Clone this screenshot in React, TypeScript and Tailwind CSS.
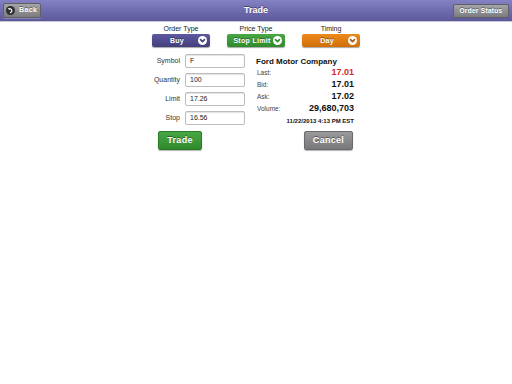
import React from 'react';

const font = { fontFamily: '"Liberation Sans", Arial, Helvetica, sans-serif' };

function Chevron({ color }: { color: string }) {
  return (
    <svg width="9" height="9" viewBox="0 0 10 10" className="shrink-0">
      <circle cx="5" cy="5" r="5" fill="#ffffff" />
      <path d="M2.8 4 L5 6.2 L7.2 4" fill="none" stroke={color} strokeWidth="1.8" strokeLinecap="round" strokeLinejoin="round" />
    </svg>
  );
}

function Picker({ label, value, bg, chev }: { label: string; value: string; bg: string; chev: string }) {
  return (
    <div className="flex flex-col items-center">
      <div className="text-[7px] leading-[8px] text-[#222] mb-[1px]">{label}</div>
      <div className={`w-[58px] h-[13px] rounded-[2px] flex items-center pl-[4px] pr-[3px] shadow-[0_1px_1px_rgba(0,0,0,0.35)] ${bg}`}>
        <span className="flex-1 text-center text-white font-bold text-[7px] leading-[8px] tracking-[0.3px] [text-shadow:0_-1px_0_rgba(0,0,0,0.4)]">{value}</span>
        <Chevron color={chev} />
      </div>
    </div>
  );
}

function Field({ label, value }: { label: string; value: string }) {
  return (
    <div className="flex items-center">
      <div className="w-[39px] text-right text-[7px] text-[#333] pr-[5px]">{label}</div>
      <div className="w-[60px] h-[14px] border border-[#bdbdbd] rounded-[2px] bg-white shadow-[inset_0_1px_1px_rgba(0,0,0,0.12)] flex items-center pl-[4px] text-[7px] text-[#222]">
        {value}
      </div>
    </div>
  );
}

function Quote({ label, value, red }: { label: string; value: string; red?: boolean }) {
  return (
    <div className="flex items-center justify-between h-[12px]">
      <span className="text-[6.5px] text-[#444] pl-[1px]">{label}</span>
      <span className={`font-bold text-[9px] ${red ? 'text-[#d42a2a]' : 'text-[#111]'}`}>{value}</span>
    </div>
  );
}

export default function App() {
  return (
    <div className="w-[512px] h-[384px] bg-white overflow-hidden" style={font}>
      {/* Header */}
      <header className="h-[22px] relative flex items-center justify-between px-[3px] bg-gradient-to-b from-[#8481c4] to-[#5c5899] border-b border-[#c9c8d8]">
        <div className="h-[15px] w-[38px] rounded-[2px] bg-gradient-to-b from-[#a5a5a8] to-[#7c7c80] border border-[#5f5f66] flex items-center pl-[2px] gap-[4px] shadow-[0_1px_0_rgba(255,255,255,0.25)]">
          <svg width="9" height="9" viewBox="0 0 10 10">
            <circle cx="5" cy="5" r="5" fill="#2e2e33" />
            <path d="M3.4 3.2 A2.2 2.2 0 1 1 4.4 7.4" fill="none" stroke="#fff" strokeWidth="1.3" />
            <path d="M2.2 2.2 L4.6 2.5 L3.5 4.6 Z" fill="#fff" />
          </svg>
          <span className="text-white text-[7px] font-bold tracking-[0.4px] [text-shadow:0_-1px_0_rgba(0,0,0,0.4)]">Back</span>
        </div>
        <div className="absolute left-0 right-0 text-center text-white font-bold text-[9px] [text-shadow:0_-1px_0_rgba(0,0,0,0.45)] pointer-events-none">
          Trade
        </div>
        <div className="h-[14px] w-[56px] rounded-[2px] bg-gradient-to-b from-[#a5a5a8] to-[#7c7c80] border border-[#5f5f66] flex items-center justify-center">
          <span className="text-white text-[6.5px] font-bold tracking-[0.3px] [text-shadow:0_-1px_0_rgba(0,0,0,0.4)]">Order Status</span>
        </div>
      </header>

      <div className="w-[220px] mx-auto">
        {/* Pickers */}
        <div className="flex justify-between px-[6px] pt-[3px]">
          <Picker label="Order Type" value="Buy" bg="bg-gradient-to-b from-[#5e59a0] to-[#433f7c]" chev="#433f7c" />
          <Picker label="Price Type" value="Stop Limit" bg="bg-gradient-to-b from-[#4aa745] to-[#2f8a2c]" chev="#2f8a2c" />
          <Picker label="Timing" value="Day" bg="bg-gradient-to-b from-[#ec8a1c] to-[#d06f06]" chev="#a85705" />
        </div>

        {/* Form + quote */}
        <div className="flex mt-[7px]">
          <div className="flex flex-col gap-[5px] w-[110px]">
            <Field label="Symbol" value="F" />
            <Field label="Quantity" value="100" />
            <Field label="Limit" value="17.26" />
            <Field label="Stop" value="16.56" />
          </div>
          <div className="w-[98px] pt-[2px]">
            <div className="h-[11px] font-bold text-[8px] text-[#111] leading-[11px]">Ford Motor Company</div>
            <Quote label="Last:" value="17.01" red />
            <Quote label="Bid:" value="17.01" />
            <Quote label="Ask:" value="17.02" />
            <Quote label="Volume:" value="29,680,703" />
            <div className="h-[12px] flex items-center justify-end text-[6px] font-bold text-[#111]">11/22/2013 4:13 PM EST</div>
          </div>
        </div>

        {/* Actions */}
        <div className="flex justify-between mt-[4px] pl-[12px] pr-[13px]">
          <div className="w-[44px] h-[19px] rounded-[2px] bg-gradient-to-b from-[#4aa745] to-[#2f8a2c] border border-[#2a7a27] flex items-center justify-center text-white font-bold text-[9px] tracking-[0.3px] [text-shadow:0_-1px_0_rgba(0,0,0,0.4)] shadow-[0_1px_1px_rgba(0,0,0,0.3)]">
            Trade
          </div>
          <div className="w-[49px] h-[19px] rounded-[2px] bg-gradient-to-b from-[#9a9a9c] to-[#78787b] border border-[#6a6a6d] flex items-center justify-center text-white font-bold text-[9px] tracking-[0.3px] [text-shadow:0_-1px_0_rgba(0,0,0,0.4)] shadow-[0_1px_1px_rgba(0,0,0,0.3)]">
            Cancel
          </div>
        </div>
      </div>
    </div>
  );
}
